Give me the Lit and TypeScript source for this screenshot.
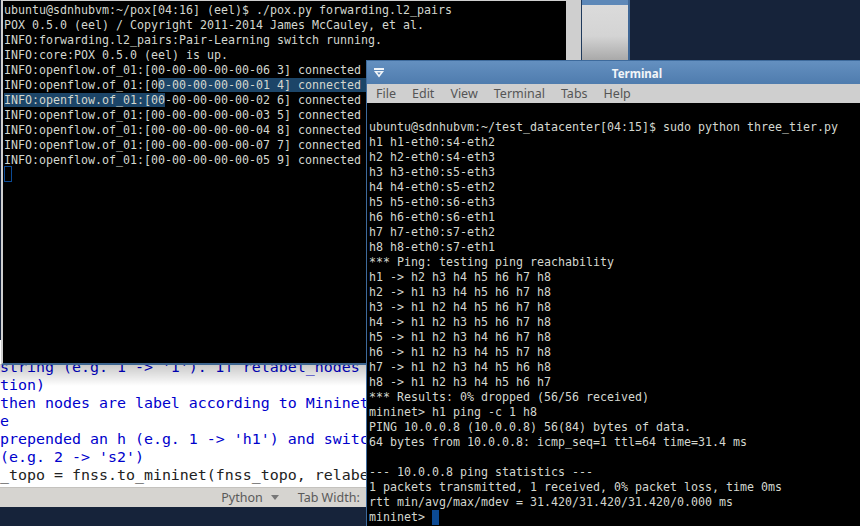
import { LitElement, html, css } from "lit";
import { customElement } from "lit/decorators.js";

const poxLines = [
  "ubuntu@sdnhubvm:~/pox[04:16] (eel)$ ./pox.py forwarding.l2_pairs",
  "POX 0.5.0 (eel) / Copyright 2011-2014 James McCauley, et al.",
  "INFO:forwarding.l2_pairs:Pair-Learning switch running.",
  "INFO:core:POX 0.5.0 (eel) is up.",
  "INFO:openflow.of_01:[00-00-00-00-00-06 3] connected",
];
const poxAfter = [
  "INFO:openflow.of_01:[00-00-00-00-00-03 5] connected",
  "INFO:openflow.of_01:[00-00-00-00-00-04 8] connected",
  "INFO:openflow.of_01:[00-00-00-00-00-07 7] connected",
  "INFO:openflow.of_01:[00-00-00-00-00-05 9] connected",
];
const termLines = [
  "",
  "ubuntu@sdnhubvm:~/test_datacenter[04:15]$ sudo python three_tier.py",
  "h1 h1-eth0:s4-eth2",
  "h2 h2-eth0:s4-eth3",
  "h3 h3-eth0:s5-eth3",
  "h4 h4-eth0:s5-eth2",
  "h5 h5-eth0:s6-eth3",
  "h6 h6-eth0:s6-eth1",
  "h7 h7-eth0:s7-eth2",
  "h8 h8-eth0:s7-eth1",
  "*** Ping: testing ping reachability",
  "h1 -> h2 h3 h4 h5 h6 h7 h8",
  "h2 -> h1 h3 h4 h5 h6 h7 h8",
  "h3 -> h1 h2 h4 h5 h6 h7 h8",
  "h4 -> h1 h2 h3 h5 h6 h7 h8",
  "h5 -> h1 h2 h3 h4 h6 h7 h8",
  "h6 -> h1 h2 h3 h4 h5 h7 h8",
  "h7 -> h1 h2 h3 h4 h5 h6 h8",
  "h8 -> h1 h2 h3 h4 h5 h6 h7",
  "*** Results: 0% dropped (56/56 received)",
  "mininet> h1 ping -c 1 h8",
  "PING 10.0.0.8 (10.0.0.8) 56(84) bytes of data.",
  "64 bytes from 10.0.0.8: icmp_seq=1 ttl=64 time=31.4 ms",
  "",
  "--- 10.0.0.8 ping statistics ---",
  "1 packets transmitted, 1 received, 0% packet loss, time 0ms",
  "rtt min/avg/max/mdev = 31.420/31.420/31.420/0.000 ms",
];
const editorLines = [
  "string (e.g. 1 -> '1'). If relabel_nodes",
  "tion)",
  "then nodes are label according to Mininet",
  "e",
  "prepended an h (e.g. 1 -> 'h1') and switc",
  "(e.g. 2 -> 's2')",
];

@customElement("app-root")
export class AppRoot extends LitElement {
  static styles = css`
    :host { display: block; width: 860px; height: 526px; }
    .desk { position: relative; width: 860px; height: 526px; overflow: hidden; background: #16233a; }
    .mono { font-family: "DejaVu Sans Mono", monospace; font-size: 11.63px; line-height: 15px; }
    .mono div { height: 15px; white-space: pre; }

    .back { position: absolute; left: 580px; top: 0; width: 50px; height: 61px; box-sizing: border-box;
      border: solid #3f6796; border-width: 0 2px 1px 2px; border-left-color: #1f3a5c; background: linear-gradient(#dcdcdc 0%, #d4d4d4 60%, #a9a9a9 100%); }
    .back-title { height: 5px; background: #5d88b8; }

    .editor { position: absolute; left: 0; top: 340px; width: 367px; height: 167px; background: #dcdad5; }
    .code { height: 147px; box-sizing: border-box; background: #fff; padding-top: 18px; overflow: hidden;
      color: #0000cc; font-family: "DejaVu Sans Mono", monospace; font-size: 14.95px; line-height: 18px; }
    .code div { height: 18px; white-space: pre; }
    .code .plain { color: #222; }
    .shadow { position: absolute; left: 0; top: 24px; width: 100%; height: 22px; background: linear-gradient(rgba(0,0,0,.22), rgba(0,0,0,0)); }
    .status { height: 20px; background: #d6d4d0; border-top: 1px solid #c4c2be; display: flex; justify-content: flex-end; align-items: center; gap: 19px;
      font: 12.5px "Noto Sans", sans-serif; color: #5a5a5a; padding-right: 4px; box-sizing: border-box; white-space: pre; }
    .status .tri { display: inline-block; margin-left: 8px; width: 0; height: 0; border: 4px solid transparent; border-top: 5px solid #777; border-bottom: 0; vertical-align: 2px; }

    .pox { position: absolute; left: 1px; top: 0; width: 580px; height: 365px; box-sizing: border-box;
      background: #000; border-top: 1px solid #cfcfcf; border-bottom: 2px solid #3e6690; border-left: 2px solid #cfcfcf; }
    .pox-text { position: absolute; left: 1px; top: 2px; color: #d3d7cf; }
    .pox-bar { position: absolute; right: 0; top: 0; bottom: 0; width: 15px; background: #cfcfcf; }
    .sel { background: #1c4568; }
    .pox-cursor { position: absolute; left: 1px; top: 165px; width: 8px; height: 16px; box-sizing: border-box; border: 1px solid #0c4a94; }

    .term { position: absolute; left: 366px; top: 60px; width: 541px; height: 470px; box-sizing: border-box;
      border: 1px solid #3d6a9c; border-right: 0; border-bottom: 0; background: #000; }
    .tb { height: 23px; background: linear-gradient(#6490c0, #4f7cae); display: flex; align-items: center; justify-content: center; position: relative;
      color: #f2f5f8; font: bold 11.5px "Noto Sans", sans-serif; box-sizing: border-box; padding-top: 1px; }
    .tb svg { position: absolute; left: 7px; top: 7px; }
    .menu { height: 19px; background: #cfcfcf; display: flex; gap: 16px; padding-left: 9px; align-items: center;
      font: 12.5px "Noto Sans", sans-serif; color: #555; }
    .term-text { padding: 2px 0 0 2px; color: #d3d7cf; }
    .term-cursor { display: inline-block; width: 7px; height: 15px; background: #0c4a94; vertical-align: top; }
  `;

  render() {
    return html`<div class="desk">
      <div class="back"><div class="back-title"></div></div>
      <div class="editor">
        <div class="code">
          ${editorLines.map((l) => html`<div>${l}</div>`)}
          <div class="plain">_topo = fnss.to_mininet(fnss_topo, relabe</div>
        </div>
        <div class="shadow"></div>
        <div class="status"><span>Python<i class="tri"></i></span><span>Tab Width: </span></div>
      </div>
      <div class="pox">
        <div class="pox-text mono">
          ${poxLines.map((l) => html`<div>${l}</div>`)}
          <div>INFO:openflow.of_01:[0<span class="sel">0-00-00-00-00-01 4] connected </span></div>
          <div><span class="sel">INFO:openflow.of_01:[00</span>-00-00-00-00-02 6] connected</div>
          ${poxAfter.map((l) => html`<div>${l}</div>`)}
        </div>
        <div class="pox-cursor"></div>
        <div class="pox-bar"></div>
      </div>
      <div class="term">
        <div class="tb">
          <svg width="10" height="10" viewBox="0 0 10 10"><path fill-rule="evenodd" d="M0 0h10v2H0zM0 3h10L5 9.5zM3.2 4.4h3.6L5 6.8z" fill="#f0f4f8"/></svg>
          <span>Terminal</span>
        </div>
        <div class="menu"><span>File</span><span>Edit</span><span>View</span><span>Terminal</span><span>Tabs</span><span>Help</span></div>
        <div class="term-text mono">
          ${termLines.map((l) => html`<div>${l}</div>`)}
          <div>mininet> <span class="term-cursor"></span></div>
        </div>
      </div>
    </div>`;
  }
}
